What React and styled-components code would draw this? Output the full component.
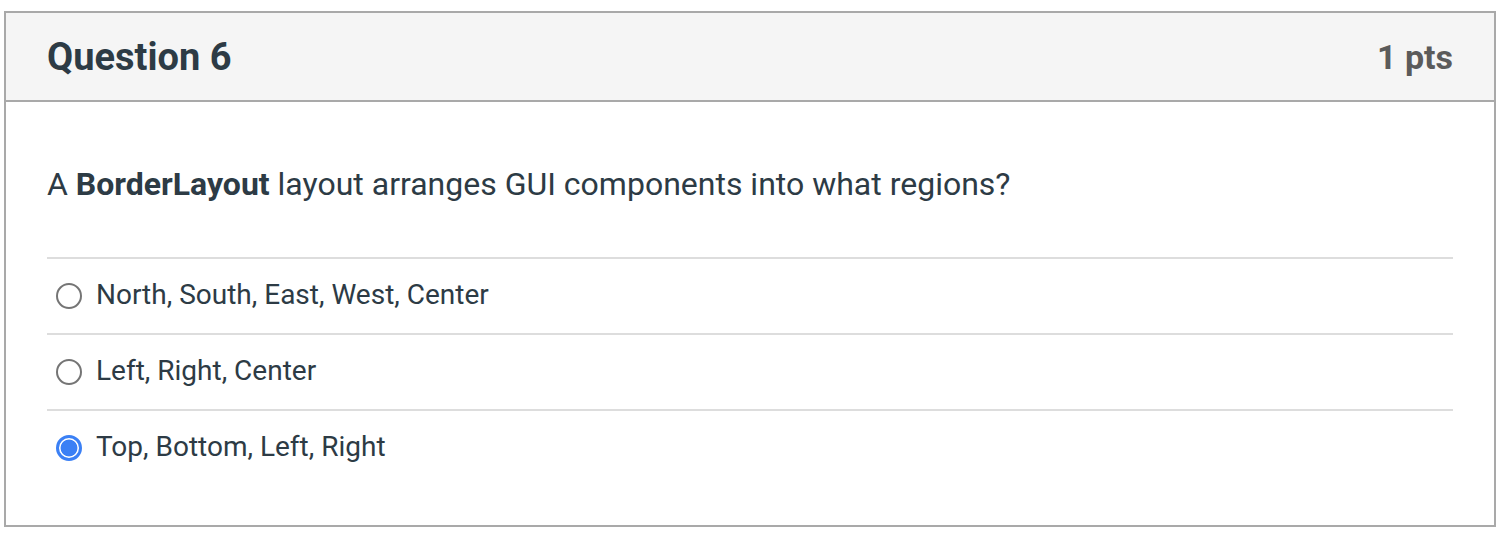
import styled, { createGlobalStyle } from "styled-components";

const GlobalStyle = createGlobalStyle`
  body {
    margin: 0;
    background: #fff;
    font-family: Roboto, "Liberation Sans", sans-serif;
  }
`;

const answers = [
  { id: "a1", text: "North, South, East, West, Center", checked: false },
  { id: "a2", text: "Left, Right, Center", checked: false },
  { id: "a3", text: "Top, Bottom, Left, Right", checked: true },
];

export default function App() {
  return (
    <Page>
      <GlobalStyle />
      <QuestionBox>
        <Header>
          <Title>Question 6</Title>
          <Points>1 pts</Points>
        </Header>
        <Body>
          <QuestionText>
            A <strong>BorderLayout</strong> layout arranges GUI components into what regions?
          </QuestionText>
          <AnswerList>
            {answers.map((a) => (
              <Answer key={a.id}>
                <Radio checked={a.checked} />
                <AnswerLabel>{a.text}</AnswerLabel>
              </Answer>
            ))}
          </AnswerList>
        </Body>
      </QuestionBox>
    </Page>
  );
}

const Page = styled.div`
  padding: 11px 8px 0 4px;
`;

const QuestionBox = styled.div`
  width: 1492px;
  box-sizing: border-box;
  border: 2px solid #a9a9a9;
  color: #2d3b45;
`;

const Header = styled.div`
  height: 87px;
  background: #f5f5f5;
  border-bottom: 2px solid #a9a9a9;
  display: flex;
  align-items: center;
  justify-content: space-between;
  padding: 0 41px;
`;

const Title = styled.h2`
  margin: 0;
  font-size: 38px;
  font-weight: 700;
  color: #2d3b45;
`;

const Points = styled.div`
  font-size: 34px;
  font-weight: 700;
  color: #5b5b5b;
`;

const Body = styled.div`
  padding: 63px 41px 40px;
`;

const QuestionText = styled.div`
  font-size: 32px;
  line-height: 39px;
  margin-bottom: 53px;

  strong {
    font-weight: 700;
  }
`;

const AnswerList = styled.div`
  display: flex;
  flex-direction: column;
`;

const Answer = styled.label`
  display: flex;
  align-items: center;
  gap: 14px;
  height: 74px;
  padding-left: 9px;
  border-top: 2px solid #dddddd;
`;

const Radio = styled.span`
  width: 26px;
  height: 26px;
  box-sizing: border-box;
  border-radius: 50%;
  flex-shrink: 0;
  border: ${(p) => (p.checked ? "3px solid #3b80f5" : "2px solid #757575")};
  background: ${(p) =>
    p.checked
      ? "radial-gradient(circle, #3b80f5 0, #3b80f5 8px, #fff 8.8px)"
      : "#fff"};
`;

const AnswerLabel = styled.span`
  font-size: 28px;
  line-height: 36px;
  margin-top: -3px;
  color: #2d3b45;
`;
